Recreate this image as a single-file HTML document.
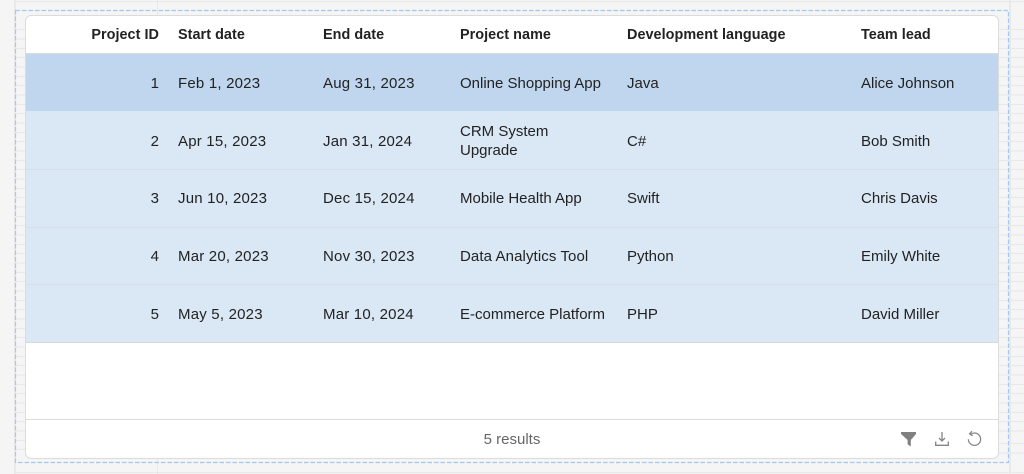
<!DOCTYPE html>
<html><head><meta charset="utf-8">
<style>
html,body{margin:0;padding:0;width:1024px;height:474px;overflow:hidden}
body{position:relative;background:#f5f5f5;font-family:"Liberation Sans",sans-serif;color:#222}
.gl{position:absolute;background:#e9e9e9}
.card{position:absolute;left:25px;top:15px;width:974px;height:444px;background:#fff;border:1px solid #dcdcdc;border-radius:6px;box-sizing:border-box;overflow:hidden}
.row{position:absolute;left:0;width:972px;box-sizing:border-box}
.t{position:absolute;font-size:15px;line-height:19px;white-space:nowrap;transform:translateY(1px)}
.d{letter-spacing:.2px}
.h{font-weight:bold;font-size:14.4px;letter-spacing:.05px;top:9px}
.r{text-align:right;width:133px;left:0}
</style></head><body>
<div class="gl" style="left:14px;top:0;width:2px;height:474px"></div>
<div class="gl" style="left:157px;top:0;width:1px;height:15px"></div>
<div class="gl" style="left:157px;top:459px;width:1px;height:15px"></div>
<div class="gl" style="left:1009px;top:0;width:1.5px;height:474px"></div>
<svg style="position:absolute;left:0;top:0" width="1024" height="474">
<path d="M15 1.5H1024M15 29.5H25M15 39H25M15 48.5H25M15 57.5H25M15 67H25M15 76.5H25M15 85.5H25M15 95H25M15 104.5H25M15 113.5H25M15 123H25M15 132.5H25M15 141.5H25M15 151H25M15 160.5H25M15 169.5H25M15 179H25M15 188.5H25M15 197.5H25M15 207H25M15 216.5H25M15 225.5H25M15 235H25M15 244.5H25M15 253.5H25M15 263H25M15 272.5H25M15 281.5H25M15 291H25M15 300.5H25M15 309.5H25M15 319H25M15 328.5H25M15 337.5H25M15 347H25M15 356.5H25M15 365.5H25M15 375H25M15 384.5H25M15 393.5H25M15 403H25M15 412.5H25M15 421.5H25M15 431H25M15 440.5H25M15 449.5H25M15 472.5H1024M999 29.5H1024M999 39H1024M999 48.5H1024M999 57.5H1024M999 67H1024M999 76.5H1024M999 85.5H1024M999 95H1024M999 104.5H1024M999 113.5H1024M999 123H1024M999 132.5H1024M999 141.5H1024M999 151H1024M999 160.5H1024M999 169.5H1024M999 179H1024M999 188.5H1024M999 197.5H1024M999 207H1024M999 216.5H1024M999 225.5H1024M999 235H1024M999 244.5H1024M999 253.5H1024M999 263H1024M999 272.5H1024M999 281.5H1024M999 291H1024M999 300.5H1024M999 309.5H1024M999 319H1024M999 328.5H1024M999 337.5H1024M999 347H1024M999 356.5H1024M999 365.5H1024M999 375H1024M999 384.5H1024M999 393.5H1024M999 403H1024M999 412.5H1024M999 421.5H1024M999 431H1024M999 443.5H1024M999 453H1024" stroke="#e9e9e9" stroke-width="1.3" fill="none"/>
<rect x="15.5" y="10.5" width="993" height="452" fill="none" stroke="#a2c8f3" stroke-width="1.2" stroke-dasharray="4.5 2"/>
</svg>
<div class="card">
  <div class="row" style="top:0;height:38px;border-bottom:1px solid #dcdcdc">
    <div class="t h r">Project ID</div>
    <div class="t h" style="left:152px">Start date</div>
    <div class="t h" style="left:297px">End date</div>
    <div class="t h" style="left:434px">Project name</div>
    <div class="t h" style="left:601px">Development language</div>
    <div class="t h" style="left:835px">Team lead</div>
  </div>
  <div class="row" style="top:38px;height:57px;background:#bfd6ee">
    <div class="t r" style="top:19px">1</div>
    <div class="t d" style="left:152px;top:19px">Feb 1, 2023</div>
    <div class="t d" style="left:297px;top:19px">Aug 31, 2023</div>
    <div class="t" style="left:434px;top:19px">Online Shopping App</div>
    <div class="t" style="left:601px;top:19px">Java</div>
    <div class="t" style="left:835px;top:19px">Alice Johnson</div>
  </div>
  <div class="row" style="top:95px;height:59px;background:#dae7f5;border-bottom:1px solid #d5dfe9">
    <div class="t r" style="top:20px">2</div>
    <div class="t d" style="left:152px;top:20px">Apr 15, 2023</div>
    <div class="t d" style="left:297px;top:20px">Jan 31, 2024</div>
    <div class="t" style="left:434px;top:10px">CRM System<br>Upgrade</div>
    <div class="t" style="left:601px;top:20px">C#</div>
    <div class="t" style="left:835px;top:20px">Bob Smith</div>
  </div>
  <div class="row" style="top:154px;height:58px;background:#dae7f5;border-bottom:1px solid #d5dfe9">
    <div class="t r" style="top:18px">3</div>
    <div class="t d" style="left:152px;top:18px">Jun 10, 2023</div>
    <div class="t d" style="left:297px;top:18px">Dec 15, 2024</div>
    <div class="t" style="left:434px;top:18px">Mobile Health App</div>
    <div class="t" style="left:601px;top:18px">Swift</div>
    <div class="t" style="left:835px;top:18px">Chris Davis</div>
  </div>
  <div class="row" style="top:212px;height:57px;background:#dae7f5;border-bottom:1px solid #d5dfe9">
    <div class="t r" style="top:18px">4</div>
    <div class="t d" style="left:152px;top:18px">Mar 20, 2023</div>
    <div class="t d" style="left:297px;top:18px">Nov 30, 2023</div>
    <div class="t" style="left:434px;top:18px;letter-spacing:.1px">Data Analytics Tool</div>
    <div class="t" style="left:601px;top:18px">Python</div>
    <div class="t" style="left:835px;top:18px">Emily White</div>
  </div>
  <div class="row" style="top:269px;height:58px;background:#dae7f5;border-bottom:1px solid #d8d8d8">
    <div class="t r" style="top:19px">5</div>
    <div class="t d" style="left:152px;top:19px">May 5, 2023</div>
    <div class="t d" style="left:297px;top:19px">Mar 10, 2024</div>
    <div class="t" style="left:434px;top:19px">E-commerce Platform</div>
    <div class="t" style="left:601px;top:19px">PHP</div>
    <div class="t" style="left:835px;top:19px">David Miller</div>
  </div>
  <div class="row" style="top:403px;height:1px;background:#dcdcdc"></div>
  <div class="t" style="left:0;width:972px;text-align:center;top:413px;color:#666">5 results</div>
</div>
<svg style="position:absolute;left:895px;top:425px" width="95" height="28" viewBox="0 0 95 28" fill="none">
  <path d="M6 7H21V9L15.8 15V21.5L12.6 19.2V15L6 9Z" fill="#808080"/>
  <path d="M47 7V16M44 13L47 16L50 13M40.7 16.5V20.3H53.3V16.5" stroke="#858585" stroke-width="1.3"/>
  <path d="M75.8 9.2C76.9 8.4 78.2 8 79.5 8C82.9 8 85.6 10.8 85.6 14.2C85.6 17.6 82.9 20.4 79.5 20.4C76.1 20.4 73.4 17.6 73.4 14.2" stroke="#858585" stroke-width="1.25"/>
  <path d="M77 6.2L74.6 8.8L77.6 10.8" stroke="#858585" stroke-width="1.25"/>
</svg>
</body></html>
